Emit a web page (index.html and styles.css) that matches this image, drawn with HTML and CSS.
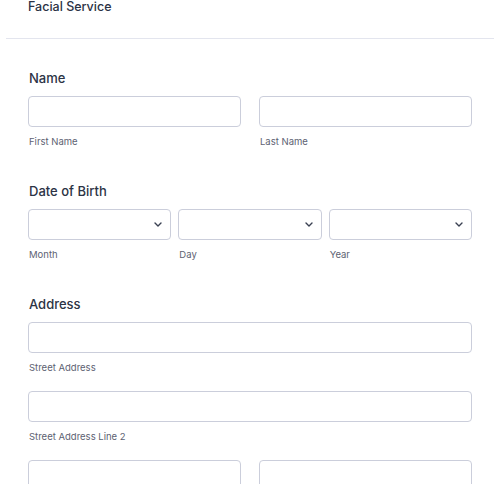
FILE: index.html
```html
<!DOCTYPE html>
<html lang="en">
<head>
<meta charset="utf-8">
<title>Facial Service</title>
<link rel="stylesheet" href="styles.css">
</head>
<body>
<div class="page">
  <header class="header">
    <h1 class="title">Facial Service</h1>
  </header>
  <hr class="divider">
  <form class="form">
    <div class="field">
      <label class="label">Name</label>
      <div class="row two">
        <div class="col">
          <div class="input"></div>
          <div class="sub">First Name</div>
        </div>
        <div class="col">
          <div class="input"></div>
          <div class="sub">Last Name</div>
        </div>
      </div>
    </div>

    <div class="field">
      <label class="label">Date of Birth</label>
      <div class="row three">
        <div class="col">
          <div class="input select"><svg class="chev" viewBox="0 0 8 5" width="8" height="5"><path d="M1 1 4 4 7 1" fill="none" stroke="#3a4152" stroke-width="1.4" stroke-linecap="round" stroke-linejoin="round"/></svg></div>
          <div class="sub">Month</div>
        </div>
        <div class="col">
          <div class="input select"><svg class="chev" viewBox="0 0 8 5" width="8" height="5"><path d="M1 1 4 4 7 1" fill="none" stroke="#3a4152" stroke-width="1.4" stroke-linecap="round" stroke-linejoin="round"/></svg></div>
          <div class="sub">Day</div>
        </div>
        <div class="col">
          <div class="input select"><svg class="chev" viewBox="0 0 8 5" width="8" height="5"><path d="M1 1 4 4 7 1" fill="none" stroke="#3a4152" stroke-width="1.4" stroke-linecap="round" stroke-linejoin="round"/></svg></div>
          <div class="sub">Year</div>
        </div>
      </div>
    </div>

    <div class="field">
      <label class="label">Address</label>
      <div class="stack">
        <div class="col">
          <div class="input"></div>
          <div class="sub">Street Address</div>
        </div>
        <div class="col">
          <div class="input"></div>
          <div class="sub">Street Address Line 2</div>
        </div>
        <div class="row two">
          <div class="input"></div>
          <div class="input"></div>
        </div>
      </div>
    </div>
  </form>
</div>
</body>
</html>
```

FILE: styles.css
```css
* { box-sizing: border-box; }
html, body { margin: 0; padding: 0; background: #ffffff; }
body {
  font-family: Inter, "Noto Sans", "Liberation Sans", sans-serif;
  color: #2c3345;
  overflow: hidden;
  height: 484px;
}
.page { width: 500px; }
.header {
  height: 38px;
  padding: 0 28px;
}
.title {
  margin: 0;
  font-size: 12.5px;
  line-height: 14px;
  font-weight: 500;
  color: #2c3345;
}
.divider {
  margin: 0 6px;
  border: 0;
  border-top: 1px solid #e3e5ee;
  height: 0;
}
.form {
  padding: 30px 28px 0;
  display: flex;
  flex-direction: column;
  gap: 34px;
}
.field { display: flex; flex-direction: column; }
.label {
  display: block;
  font-size: 13px;
  line-height: 18px;
  font-weight: 500;
  color: #2c3345;
  margin-bottom: 9px;
  padding-left: 1px;
}
.row { display: grid; }
.row.two { grid-template-columns: 1fr 1fr; column-gap: 18px; }
.row.three { grid-template-columns: 1fr 1fr 1fr; column-gap: 7px; }
.stack { display: flex; flex-direction: column; gap: 17px; }
.col { display: flex; flex-direction: column; min-width: 0; }
.input {
  height: 31px;
  border: 1px solid #cbcedb;
  border-radius: 4px;
  background: #fff;
}
.select {
  display: flex;
  align-items: center;
  justify-content: flex-end;
  padding-right: 8px;
}
.chev { display: block; }
.sub {
  margin-top: 9px;
  font-size: 9.5px;
  line-height: 12px;
  color: #5d6272;
  padding-left: 1px;
}
```
